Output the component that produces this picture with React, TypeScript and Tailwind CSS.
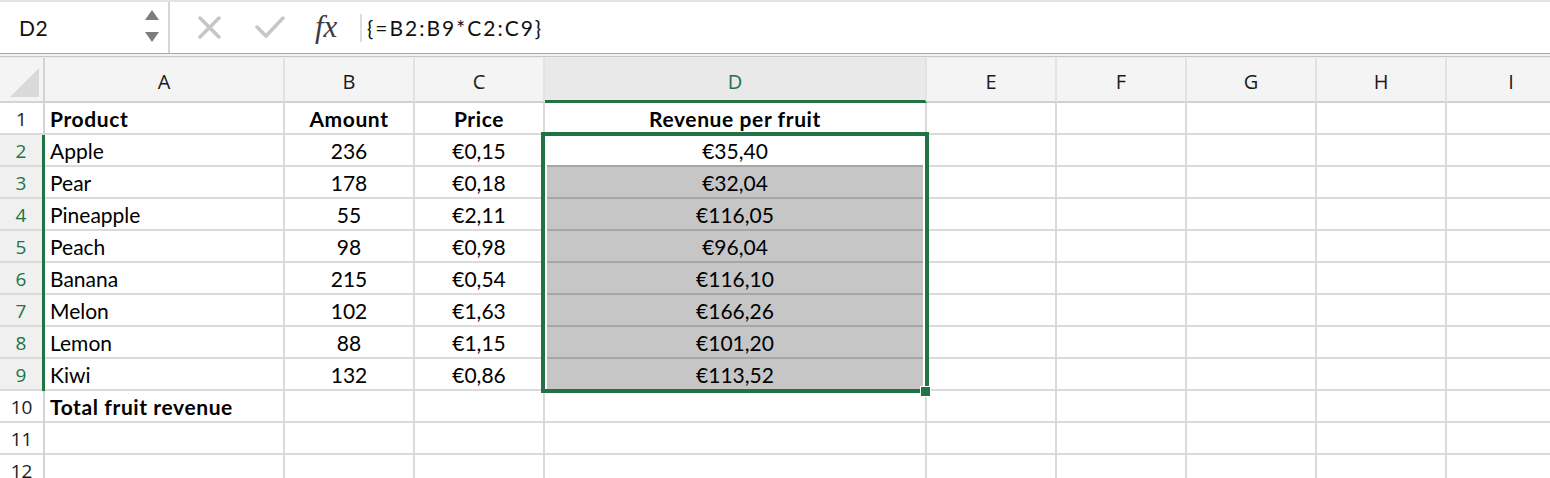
import React from 'react';

type Col = { key: string; w: string; align: 'left' | 'center' };

const cols: Col[] = [
  { key: 'A', w: 'w-[240px]', align: 'left' },
  { key: 'B', w: 'w-[130px]', align: 'center' },
  { key: 'C', w: 'w-[130px]', align: 'center' },
  { key: 'D', w: 'w-[382px]', align: 'center' },
  { key: 'E', w: 'w-[130px]', align: 'center' },
  { key: 'F', w: 'w-[130px]', align: 'center' },
  { key: 'G', w: 'w-[130px]', align: 'center' },
  { key: 'H', w: 'w-[130px]', align: 'center' },
  { key: 'I', w: 'w-[130px]', align: 'center' },
];

const rows: { cells: string[]; bold?: boolean }[] = [
  { cells: ['Product', 'Amount', 'Price', 'Revenue per fruit'], bold: true },
  { cells: ['Apple', '236', '€0,15', '€35,40'] },
  { cells: ['Pear', '178', '€0,18', '€32,04'] },
  { cells: ['Pineapple', '55', '€2,11', '€116,05'] },
  { cells: ['Peach', '98', '€0,98', '€96,04'] },
  { cells: ['Banana', '215', '€0,54', '€116,10'] },
  { cells: ['Melon', '102', '€1,63', '€166,26'] },
  { cells: ['Lemon', '88', '€1,15', '€101,20'] },
  { cells: ['Kiwi', '132', '€0,86', '€113,52'] },
  { cells: ['Total fruit revenue'], bold: true },
  { cells: [] },
  { cells: [] },
];

const cellFont = { fontFamily: 'Lato, "Liberation Sans", sans-serif' };
const headFont = { fontFamily: '"Open Sans", "DejaVu Sans", sans-serif' };

const FormulaBar = () => (
  <div className="flex h-[53px] items-center border-t-2 border-[#e4e4e4] bg-white">
    <div className="relative flex h-full w-[170px] shrink-0 items-center border-r-2 border-[#d6d6d6]">
      <span className="pl-[19px] text-[21px] tracking-[0.5px] text-[#111]" style={cellFont}>
        D2
      </span>
      <svg className="absolute left-[145px] top-[8px]" width="14" height="34" viewBox="0 0 14 34">
        <path d="M7 0 L14 10 L0 10 Z" fill="#7d7d7d" />
        <path d="M0 22 L14 22 L7 32 Z" fill="#7d7d7d" />
      </svg>
    </div>
    <svg className="ml-[28px] shrink-0" width="23" height="23" viewBox="0 0 23 23">
      <path d="M2 2 L21 21 M21 2 L2 21" stroke="#c6c6c6" strokeWidth="3.5" strokeLinecap="round" />
    </svg>
    <svg className="ml-[34px] shrink-0" width="30" height="23" viewBox="0 0 30 23">
      <path d="M2 11 L11 20 L28 2" fill="none" stroke="#c6c6c6" strokeWidth="3.5" strokeLinecap="round" strokeLinejoin="round" />
    </svg>
    <span
      className="ml-[30px] w-[45px] shrink-0 pb-[2px] text-[31px] italic leading-none text-[#3c3c3c]"
      style={{ fontFamily: '"Liberation Serif", serif' }}
    >
      fx
    </span>
    <div className="h-[28px] w-[2px] shrink-0 bg-[#dcdcdc]" />
    <span className="ml-[5px] text-[21px] tracking-[2px] text-[#111]" style={cellFont}>
      {'{=B2:B9*C2:C9}'}
    </span>
  </div>
);

const HeaderRow = () => (
  <div className="flex h-[45px]">
    <div className="relative h-full w-[45px] shrink-0 border-r-2 border-b-2 border-[#d4d4d4] bg-[#f4f4f4]">
      <svg className="absolute left-[10px] top-[10px]" width="29" height="29" viewBox="0 0 29 29">
        <path d="M29 0 L29 29 L0 29 Z" fill="#d9d9d9" />
      </svg>
    </div>
    {cols.map(c =>
      c.key === 'D' ? (
        <div
          key={c.key}
          className={`${c.w} h-full shrink-0 border-r-2 border-r-[#e2e2e2] border-b-[3px] border-b-[#217346] bg-[#e9e9e9] pt-[10px] text-center text-[20px] leading-[28px] text-[#217346]`}
          style={headFont}
        >
          {c.key}
        </div>
      ) : (
        <div
          key={c.key}
          className={`${c.w} h-full shrink-0 border-r-2 border-r-[#e2e2e2] border-b-2 border-b-[#d0d0d0] bg-[#f4f4f4] pt-[10px] text-center text-[20px] leading-[28px] text-[#1a1a1a]`}
          style={headFont}
        >
          {c.key}
        </div>
      )
    )}
  </div>
);

const DataCell = ({ col, text, bold, row }: { col: Col; text?: string; bold?: boolean; row: number }) => {
  const isD = col.key === 'D';
  const shaded = isD && row >= 3 && row <= 9;
  const darkLine = isD && row >= 2 && row <= 8;
  const whiteLine = isD && row === 9;
  return (
    <div className={`${col.w} flex h-full shrink-0 flex-col border-r-2 border-[#dadada]`}>
      <div
        className={`h-[30px] overflow-hidden whitespace-nowrap pt-[2px] text-[21px] leading-[28px] text-black ${
          shaded ? 'mx-[2px] bg-[#c6c6c6]' : ''
        } ${col.align === 'left' ? 'pl-[5px] text-left' : 'text-center'} ${bold ? 'font-bold tracking-[0.6px]' : ''}`}
        style={cellFont}
      >
        {text}
      </div>
      {darkLine ? (
        <div className="flex h-[2px] bg-white">
          <div className="mx-[2px] flex-1 bg-[#a6a6a6]" />
        </div>
      ) : (
        <div className={`h-[2px] ${whiteLine ? 'bg-white' : 'bg-[#dadada]'}`} />
      )}
    </div>
  );
};

const DataRow = ({ n, cells, bold }: { n: number; cells: string[]; bold?: boolean }) => {
  const sel = n >= 2 && n <= 9;
  return (
    <div className="flex h-[32px]">
      <div
        className={`flex h-full w-[45px] shrink-0 flex-col ${
          sel ? 'border-r-[3px] border-[#217346] bg-[#f0f0f0]' : 'border-r-2 border-[#d4d4d4] bg-white'
        }`}
      >
        <div
          className={`h-[30px] pt-[3px] text-center text-[19px] leading-[27px] ${sel ? 'text-[#217346]' : 'text-[#1a1a1a]'}`}
          style={headFont}
        >
          {n}
        </div>
        <div className="h-[2px] bg-[#dadada]" />
      </div>
      {cols.map((c, i) => (
        <DataCell key={c.key} col={c} text={cells[i]} bold={bold} row={n} />
      ))}
    </div>
  );
};

export default function App() {
  return (
    <div className="h-[478px] w-[1550px] overflow-hidden bg-white">
      <FormulaBar />
      <div className="h-[1px] bg-[#a9a9a9]" />
      <div className="h-[2px] bg-[#f2f2f2]" />
      <div className="h-[1px] bg-[#c6c6c6]" />
      <div className="h-[1px] bg-[#ececec]" />
      <div className="relative">
        <HeaderRow />
        {rows.map((r, i) => (
          <DataRow key={i} n={i + 1} cells={r.cells} bold={r.bold} />
        ))}
        <div className="pointer-events-none absolute left-[541px] top-[74px] h-[261px] w-[388px] border-4 border-[#217346]" />
        <div className="absolute left-[920px] top-[328px] h-[11px] w-[11px] border border-white bg-[#217346]" />
      </div>
    </div>
  );
}
